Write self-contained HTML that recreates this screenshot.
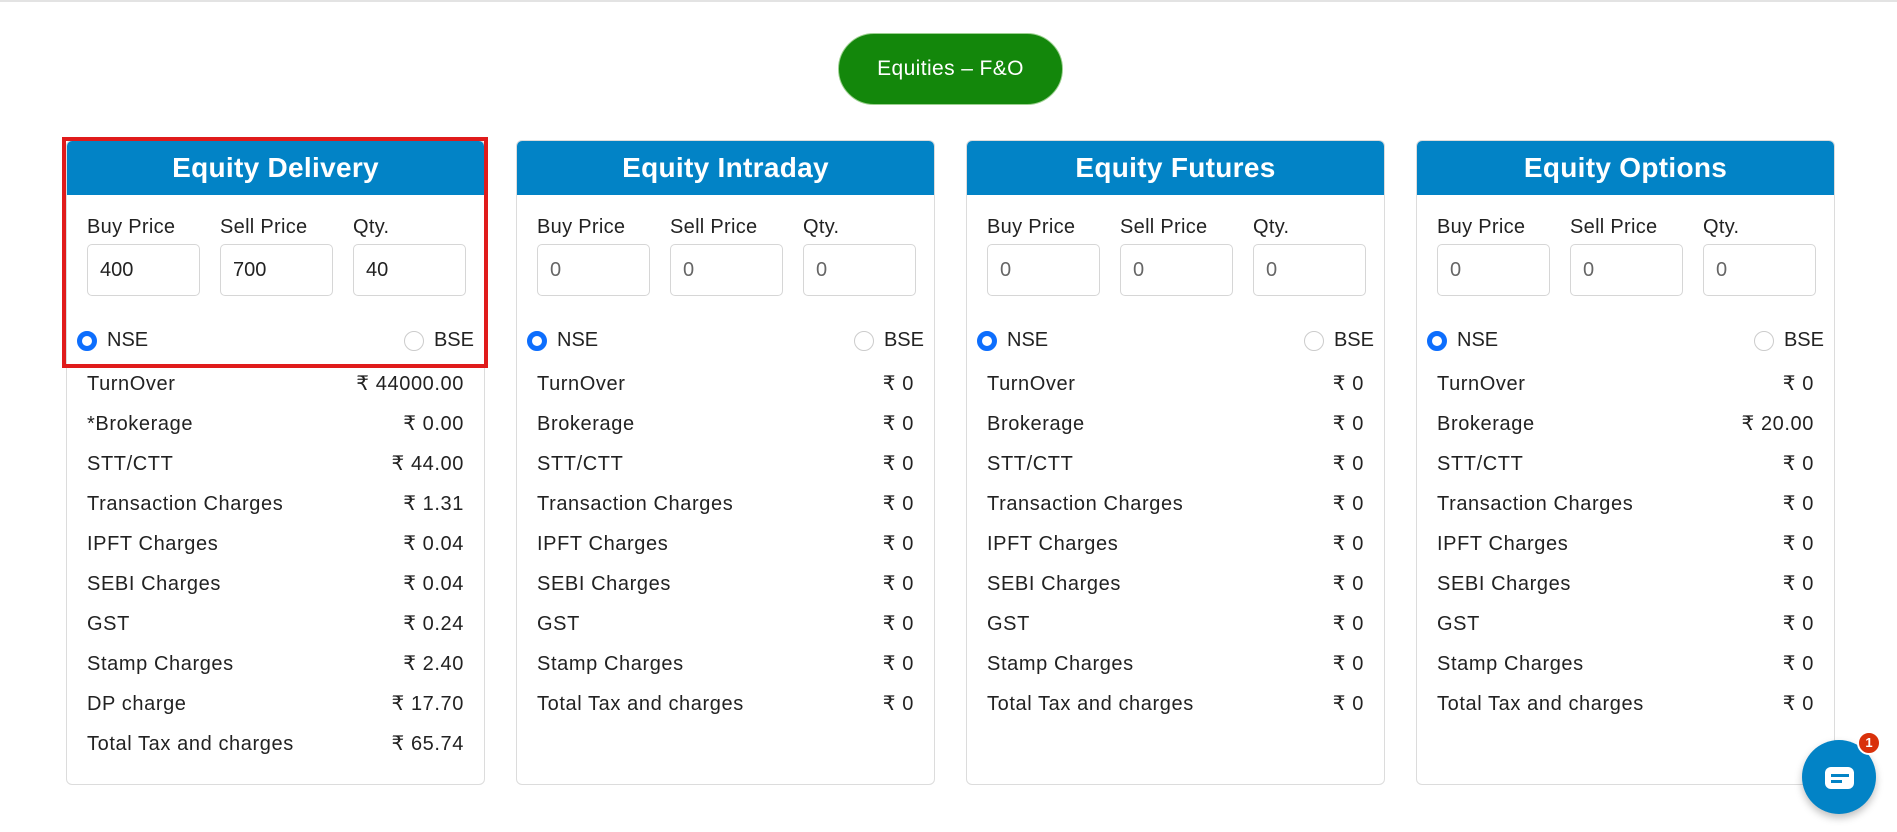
<!DOCTYPE html>
<html><head><meta charset="utf-8"><style>
*{box-sizing:border-box;margin:0;padding:0}
body{width:1897px;height:832px;background:#fff;font-family:"Liberation Sans",sans-serif;color:#222;position:relative;overflow:hidden;border-top:2px solid #e3e3e3}
.btn{position:absolute;left:838px;top:31px;width:225px;height:72px;border-radius:36px;background:#13870b;color:#fff;font-size:21px;display:flex;align-items:center;justify-content:center;border:1px solid #9bd08f;letter-spacing:.4px}
.card{position:absolute;top:138px;width:419px;height:645px;border:1px solid #dcdcdc;border-radius:6px;overflow:hidden}
.hd{height:54px;background:#0283c6;color:#fff;font-weight:bold;font-size:28px;text-align:center;line-height:54px;letter-spacing:.3px}
.lbls{position:absolute;top:75px;left:20px;font-size:20px;letter-spacing:.3px}
.lbls span,.inp{position:absolute}
.inp{top:103px;width:113px;height:52px;border:1px solid #d6d6d6;border-radius:5px;font-size:20px;padding-left:12px;line-height:50px;color:#666}
.inp.v{color:#222}
.rad{position:absolute;top:188px;font-size:20px;display:flex;align-items:center}
.rb{width:20px;height:20px;border-radius:50%;margin-right:10px}
.on{border:5px solid #0d6efd;background:#fff}
.off{border:1px solid #ccc}
.rows{position:absolute;top:223px;left:20px;right:20px;font-size:20px;letter-spacing:.6px}
.r{display:flex;justify-content:space-between;height:40px;line-height:40px}
.red{position:absolute;left:62px;top:135px;width:426px;height:231px;border:4px solid #e01b1b}
.chat{position:absolute;left:1802px;top:738px;width:74px;height:74px;border-radius:50%;background:#0283c6;box-shadow:0 4px 8px rgba(0,0,0,.25)}
.badge{position:absolute;left:1857px;top:729px;width:24px;height:24px;border-radius:50%;background:#d9310b;border:2px solid #fff;color:#fff;font-size:13px;font-weight:bold;text-align:center;line-height:20px}
</style></head><body>
<div class="btn">Equities – F&amp;O</div>

<div class="card" style="left:66px">
<div class="hd">Equity Delivery</div>
<div class="lbls"><span style="left:0">Buy&nbsp;Price</span><span style="left:133px">Sell&nbsp;Price</span><span style="left:266px">Qty.</span></div>
<div class="inp v" style="left:20px">400</div><div class="inp v" style="left:153px">700</div><div class="inp v" style="left:286px">40</div>
<div class="rad" style="left:10px"><div class="rb on"></div>NSE</div>
<div class="rad" style="right:10px"><div class="rb off"></div>BSE</div>
<div class="rows">
<div class="r"><span>TurnOver</span><span>₹ 44000.00</span></div>
<div class="r"><span>*Brokerage</span><span>₹ 0.00</span></div>
<div class="r"><span>STT/CTT</span><span>₹ 44.00</span></div>
<div class="r"><span>Transaction Charges</span><span>₹ 1.31</span></div>
<div class="r"><span>IPFT Charges</span><span>₹ 0.04</span></div>
<div class="r"><span>SEBI Charges</span><span>₹ 0.04</span></div>
<div class="r"><span>GST</span><span>₹ 0.24</span></div>
<div class="r"><span>Stamp Charges</span><span>₹ 2.40</span></div>
<div class="r"><span>DP charge</span><span>₹ 17.70</span></div>
<div class="r"><span>Total Tax and charges</span><span>₹ 65.74</span></div>
</div></div>

<div class="card" style="left:516px">
<div class="hd">Equity Intraday</div>
<div class="lbls"><span style="left:0">Buy&nbsp;Price</span><span style="left:133px">Sell&nbsp;Price</span><span style="left:266px">Qty.</span></div>
<div class="inp" style="left:20px">0</div><div class="inp" style="left:153px">0</div><div class="inp" style="left:286px">0</div>
<div class="rad" style="left:10px"><div class="rb on"></div>NSE</div>
<div class="rad" style="right:10px"><div class="rb off"></div>BSE</div>
<div class="rows">
<div class="r"><span>TurnOver</span><span>₹ 0</span></div>
<div class="r"><span>Brokerage</span><span>₹ 0</span></div>
<div class="r"><span>STT/CTT</span><span>₹ 0</span></div>
<div class="r"><span>Transaction Charges</span><span>₹ 0</span></div>
<div class="r"><span>IPFT Charges</span><span>₹ 0</span></div>
<div class="r"><span>SEBI Charges</span><span>₹ 0</span></div>
<div class="r"><span>GST</span><span>₹ 0</span></div>
<div class="r"><span>Stamp Charges</span><span>₹ 0</span></div>
<div class="r"><span>Total Tax and charges</span><span>₹ 0</span></div>
</div></div>

<div class="card" style="left:966px">
<div class="hd">Equity Futures</div>
<div class="lbls"><span style="left:0">Buy&nbsp;Price</span><span style="left:133px">Sell&nbsp;Price</span><span style="left:266px">Qty.</span></div>
<div class="inp" style="left:20px">0</div><div class="inp" style="left:153px">0</div><div class="inp" style="left:286px">0</div>
<div class="rad" style="left:10px"><div class="rb on"></div>NSE</div>
<div class="rad" style="right:10px"><div class="rb off"></div>BSE</div>
<div class="rows">
<div class="r"><span>TurnOver</span><span>₹ 0</span></div>
<div class="r"><span>Brokerage</span><span>₹ 0</span></div>
<div class="r"><span>STT/CTT</span><span>₹ 0</span></div>
<div class="r"><span>Transaction Charges</span><span>₹ 0</span></div>
<div class="r"><span>IPFT Charges</span><span>₹ 0</span></div>
<div class="r"><span>SEBI Charges</span><span>₹ 0</span></div>
<div class="r"><span>GST</span><span>₹ 0</span></div>
<div class="r"><span>Stamp Charges</span><span>₹ 0</span></div>
<div class="r"><span>Total Tax and charges</span><span>₹ 0</span></div>
</div></div>

<div class="card" style="left:1416px">
<div class="hd">Equity Options</div>
<div class="lbls"><span style="left:0">Buy&nbsp;Price</span><span style="left:133px">Sell&nbsp;Price</span><span style="left:266px">Qty.</span></div>
<div class="inp" style="left:20px">0</div><div class="inp" style="left:153px">0</div><div class="inp" style="left:286px">0</div>
<div class="rad" style="left:10px"><div class="rb on"></div>NSE</div>
<div class="rad" style="right:10px"><div class="rb off"></div>BSE</div>
<div class="rows">
<div class="r"><span>TurnOver</span><span>₹ 0</span></div>
<div class="r"><span>Brokerage</span><span>₹ 20.00</span></div>
<div class="r"><span>STT/CTT</span><span>₹ 0</span></div>
<div class="r"><span>Transaction Charges</span><span>₹ 0</span></div>
<div class="r"><span>IPFT Charges</span><span>₹ 0</span></div>
<div class="r"><span>SEBI Charges</span><span>₹ 0</span></div>
<div class="r"><span>GST</span><span>₹ 0</span></div>
<div class="r"><span>Stamp Charges</span><span>₹ 0</span></div>
<div class="r"><span>Total Tax and charges</span><span>₹ 0</span></div>
</div></div>

<div class="red"></div>
<div class="chat"><svg width="74" height="74" viewBox="0 0 74 74"><rect x="23" y="27" width="29" height="22" rx="6" fill="#fff"/><rect x="29" y="34" width="18" height="3" fill="#0283c6"/><rect x="29" y="40" width="11" height="3" fill="#0283c6"/></svg></div>
<div class="badge">1</div>
</body></html>
